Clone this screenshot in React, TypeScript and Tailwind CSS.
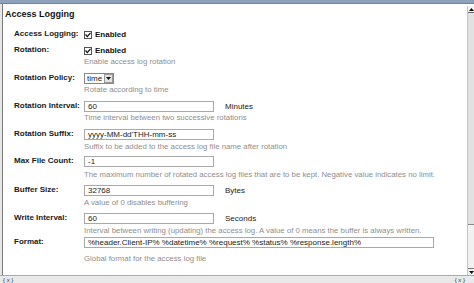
import React from "react";

const Check = () => (
  <span className="inline-flex h-[8px] w-[8px] items-center justify-center border border-[#555] bg-white mr-[3px]">
    <svg width="6" height="6" viewBox="0 0 6 6">
      <path d="M0.5 2.5 L2.3 4.6 L5.5 0.8" stroke="#111" strokeWidth="1.3" fill="none" />
    </svg>
  </span>
);

const Input = ({ value, wide = false }: { value: string; wide?: boolean }) => (
  <div
    className={`${wide ? "w-[350px]" : "w-[130px]"} h-[11px] border border-[#a9a9a9] bg-white px-[3px] text-[8px] leading-[9px] text-[#222] overflow-hidden whitespace-nowrap`}
  >
    {value}
  </div>
);

const Hint = ({ children, mt }: { children: React.ReactNode; mt: string }) => (
  <div className={`${mt} h-[10px] text-[7.8px] leading-[10px] text-[#8e8e8e] whitespace-nowrap`}>{children}</div>
);

const Label = ({ children }: { children: React.ReactNode }) => (
  <div className="w-[70px] shrink-0 text-[8px] font-bold leading-[10px] text-[#1a1a1a] whitespace-nowrap">{children}</div>
);

const Unit = ({ children }: { children: React.ReactNode }) => (
  <span className="ml-[11px] text-[8px] leading-[11px] text-[#222]">{children}</span>
);

export default function App() {
  return (
    <div
      className="relative h-[283px] w-[474px] overflow-hidden bg-white"
      style={{ fontFamily: '"Liberation Sans", Arial, sans-serif' }}
    >
      <div className="h-[4px] bg-[#8da2ba] border-b border-[#6f86a1]" />
      <div className="flex h-[271px]">
        <div className="w-[3px] shrink-0 border-r border-[#7a7a7a] bg-[#e6e6e6]" />
        <div className="flex-1 pl-[2px] pt-[4px]">
          <div className="h-[12px] text-[9px] font-bold leading-[12px] text-[#111]">Access Logging</div>
          <div className="pl-[9px]">
            <div className="mt-[9px] flex">
              <Label>Access Logging:</Label>
              <div className="flex items-center h-[11px] text-[8px] font-bold text-[#111]"><Check />Enabled</div>
            </div>
            <div className="mt-[5px] flex">
              <Label>Rotation:</Label>
              <div>
                <div className="flex items-center h-[11px] text-[8px] font-bold text-[#111]"><Check />Enabled</div>
                <Hint mt="mt-[1px]">Enable access log rotation</Hint>
              </div>
            </div>
            <div className="mt-[6px] flex">
              <Label>Rotation Policy:</Label>
              <div>
                <div className="flex h-[11px] w-[30px] items-center justify-between border border-[#888] bg-white pl-[2px] text-[8px] text-[#222]">
                  <span>time</span>
                  <span className="flex h-[9px] w-[9px] items-center justify-center border border-[#999] bg-[#e4e4e4]">
                    <svg width="5" height="3" viewBox="0 0 5 3"><path d="M0 0 L5 0 L2.5 3 Z" fill="#111" /></svg>
                  </span>
                </div>
                <Hint mt="mt-[1px]">Rotate according to time</Hint>
              </div>
            </div>
            <div className="mt-[6px] flex">
              <Label>Rotation Interval:</Label>
              <div>
                <div className="flex items-center"><Input value="60" /><Unit>Minutes</Unit></div>
                <Hint mt="mt-[1px]">Time interval between two successive rotations</Hint>
              </div>
            </div>
            <div className="mt-[6px] flex">
              <Label>Rotation Suffix:</Label>
              <div>
                <Input value="yyyy-MM-dd'THH-mm-ss" />
                <Hint mt="mt-[2px]">Suffix to be added to the access log file name after rotation</Hint>
              </div>
            </div>
            <div className="mt-[4px] flex">
              <Label>Max File Count:</Label>
              <div>
                <Input value="-1" />
                <Hint mt="mt-[3px]">The maximum number of rotated access log files that are to be kept. Negative value indicates no limit.</Hint>
              </div>
            </div>
            <div className="mt-[5px] flex">
              <Label>Buffer Size:</Label>
              <div>
                <div className="flex items-center"><Input value="32768" /><Unit>Bytes</Unit></div>
                <Hint mt="mt-[2px]">A value of 0 disables buffering</Hint>
              </div>
            </div>
            <div className="mt-[5px] flex">
              <Label>Write Interval:</Label>
              <div>
                <div className="flex items-center"><Input value="60" /><Unit>Seconds</Unit></div>
                <Hint mt="mt-[2px]">Interval between writing (updating) the access log. A value of 0 means the buffer is always written.</Hint>
              </div>
            </div>
            <div className="mt-[1px] flex">
              <Label>Format:</Label>
              <div>
                <Input value="%header.Client-IP% %datetime% %request% %status% %response.length%" wide />
                <Hint mt="mt-[6px]">Global format for the access log file</Hint>
              </div>
            </div>
          </div>
        </div>
        <div className="w-[7px] shrink-0 flex flex-col bg-[#e4e4e4] border-l border-[#c4c4c4] mt-[2px]">
          <div className="flex h-[7px] items-center justify-center border-b border-[#666] bg-[#f3f3f3]">
            <svg width="5" height="3" viewBox="0 0 5 3"><path d="M0 3 L5 3 L2.5 0 Z" fill="#111" /></svg>
          </div>
          <div className="h-[212px] border-b border-[#8a8a8a] bg-[#e2e2e2]" />
          <div className="flex-1 bg-[#f1f1f1]" />
          <div className="flex h-[7px] items-center justify-center border-t border-[#777] bg-[#f3f3f3]">
            <svg width="5" height="3" viewBox="0 0 5 3"><path d="M0 0 L5 0 L2.5 3 Z" fill="#111" /></svg>
          </div>
        </div>
      </div>
      <div className="flex h-[8px] items-center border-t border-[#aaa] bg-[#e9e9e9]">
        <span className="ml-[3px] text-[6px] leading-[6px] text-[#333]">{"{ x }"}</span>
        <div className="flex-1" />
        <span className="mr-[9px] text-[6px] leading-[6px] text-[#333]">{"{ x }"}</span>
      </div>
    </div>
  );
}
